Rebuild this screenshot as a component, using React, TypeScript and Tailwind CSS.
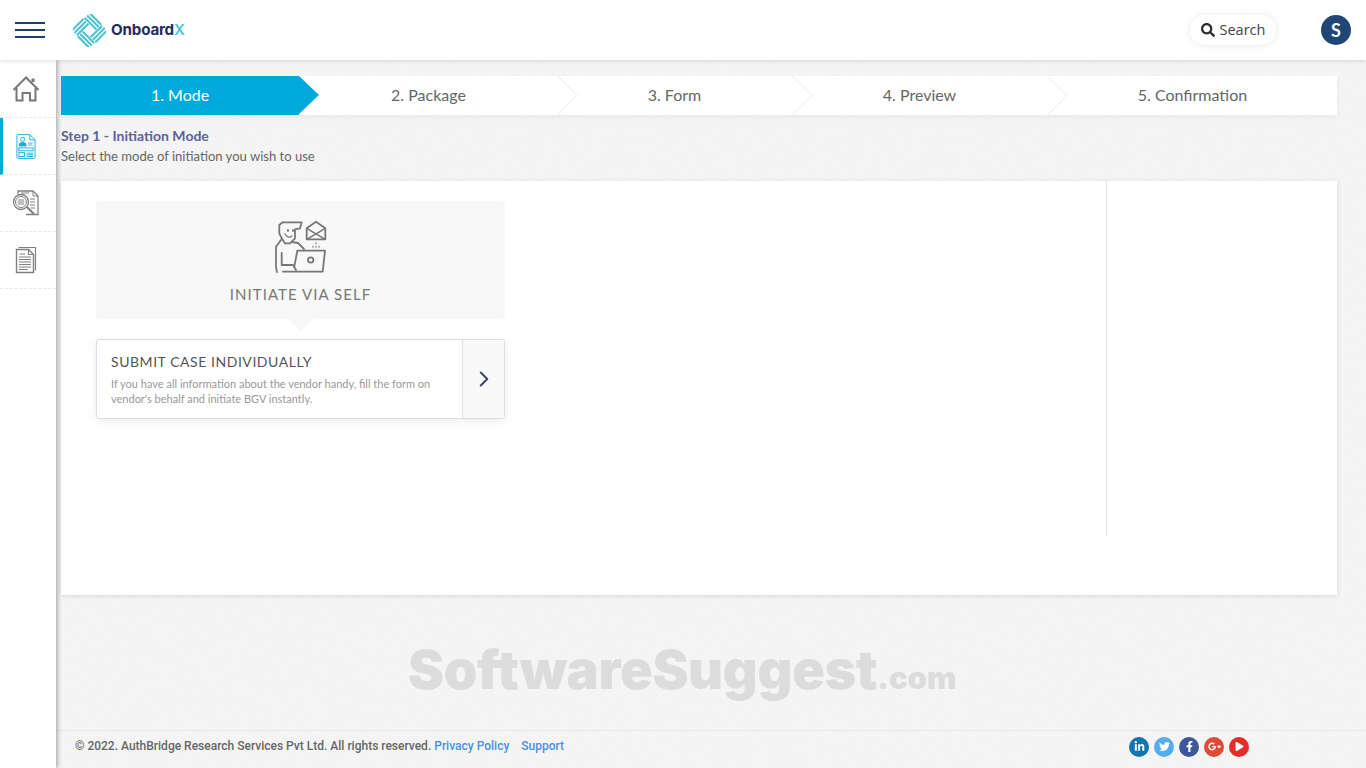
import React from "react";
import { FaLinkedinIn, FaTwitter, FaFacebookF, FaGooglePlusG, FaPlay, FaSearch } from "react-icons/fa";
import { LuChevronRight } from "react-icons/lu";

const Logo = () => (
  <svg width="33" height="33" viewBox="0 0 32 32" fill="none" stroke="#4fc3d3" strokeWidth="2.1">
    <g transform="rotate(45 16 16)">
      <path d="M4 4H20M4 7.3H20M4 10.6H20" />
      <path d="M28 4V20M24.7 4V20M21.4 4V20" />
      <path d="M28 28H12M28 24.7H12M28 21.4H12" />
      <path d="M4 28V12M7.3 28V12M10.6 28V12" />
    </g>
  </svg>
);

const HomeIcon = () => (
  <svg width="28" height="30" viewBox="0 0 28 30" fill="none" stroke="#777" strokeWidth="2">
    <path d="M1.5 16 14 3.5 26.5 16" />
    <path d="M4.5 14V26.5H10.5V19H18V26.5H23.5V14" />
    <path d="M21 4.5V8" strokeWidth="3" />
  </svg>
);

const BlueDoc = () => (
  <svg width="20" height="27" viewBox="0 0 21 27" fill="none" stroke="#1aaedf" strokeWidth="1">
    <path d="M1.5 1H14.5L20 6.5V25A1 1 0 0 1 19 26H2A1 1 0 0 1 1 25V1.5Z" />
    <path d="M14.5 1V6.5H20" />
    <circle cx="7" cy="6" r="2.2" />
    <path d="M3.5 13V10.5Q7 7.5 10.5 10.5V13Z" fill="#1aaedf" />
    <path d="M12.5 10H17.5M12.5 12H17.5" strokeWidth="1.2" opacity=".7" />
    <rect x="3" y="15" width="15" height="3" />
    <rect x="3" y="20" width="6" height="4" />
    <path d="M11 20.5H18M11 22.2H18M11 24H18" />
  </svg>
);

const SearchDoc = () => (
  <svg width="28" height="28" viewBox="0 0 28 28" fill="none" stroke="#808080" strokeWidth="1">
    <path d="M6 5V2H21L26 7V25.5H14" strokeWidth="1.3" />
    <path d="M21 2V7H26" />
    <circle cx="9" cy="13" r="7.5" strokeWidth="1.3" />
    <circle cx="9" cy="13" r="5.5" />
    <path d="M6 11H12M5.5 13H12.5M6 15H12" />
    <path d="M15 18 22 25" strokeWidth="2.2" />
    <path d="M9 4H17M18 10H23M18 13H23M18 16H23M19 19H23" strokeWidth="1.2" />
  </svg>
);

const PaperDoc = () => (
  <svg width="22" height="28" viewBox="0 0 22 28" fill="none" stroke="#808080" strokeWidth="1.2">
    <path d="M3.5 1.5H20.5V24.5" />
    <path d="M1.5 3.5H13.5L18.5 8.5V26.5H1.5Z" strokeWidth="1.4" />
    <path d="M13.5 3.5V8.5H18.5" />
    <path d="M4.5 8H10M4 11H16M4 13.5H16M4 16H16M4 18.5H16M4 21H16M4 23.5H13" strokeWidth="1.1" />
  </svg>
);

const PersonIcon = () => (
  <svg width="60" height="64" viewBox="0 0 60 64" fill="none" stroke="#777" strokeWidth="1.8" strokeLinejoin="round" strokeLinecap="round">
    <path d="M9.3 18.3V10L12.7 7.3H31.7L30 13.3 25 14.3V23.3L20 28.3H15L11.7 23.3Z" />
    <path d="M15 19Q18 24 22 21" strokeWidth="1.4" />
    <path d="M18 15V16M23 15V16" />
    <path d="M11 25 6 31.7V52L7 57" />
    <path d="M11.7 38V50H23L26 55" />
    <path d="M21.7 27 28 28 34 34" />
    <path d="M24.3 51.7 27.3 35.7H55L52.7 56.7H13" />
    <circle cx="40.7" cy="45" r="2.7" />
    <path d="M36.7 13.3 46 6.7 55.3 13.3V24.3H36.7Z" />
    <path d="M36.7 13.3 55.3 24.3M55.3 13.3 36.7 24.3" strokeWidth="1.5" />
    <path d="M46 28V28.5M43 31.5V32M46 31.5V32M49 31.5V32" strokeWidth="1.3" />
  </svg>
);

const Chevron = () => (
  <svg width="21" height="39" viewBox="0 0 21 39" fill="none" stroke="#e9e9e9" className="absolute right-[-20px] top-0">
    <path d="M0.5 0 20 19.5 0.5 39" />
  </svg>
);

const steps = [
  { label: "2. Package", cls: "w-[259px]" },
  { label: "3. Form", cls: "w-[235px] pr-[2px]" },
  { label: "4. Preview", cls: "w-[255px] pr-[2px]" },
  { label: "5. Confirmation", cls: "w-[289px]" },
];

const socials = [
  { bg: "bg-[#0f76b1]", icon: <FaLinkedinIn size={11} /> },
  { bg: "bg-[#55acee]", icon: <FaTwitter size={11} /> },
  { bg: "bg-[#3b5998]", icon: <FaFacebookF size={11} /> },
  { bg: "bg-[#dd4b39]", icon: <FaGooglePlusG size={13} /> },
  { bg: "bg-[#e52d27]", icon: <FaPlay size={9} /> },
];

export default function App() {
  return (
    <div className="relative flex h-[768px] w-[1366px] flex-col overflow-hidden bg-[#f7f7f7] font-['Lato',sans-serif]">
      <svg className="pointer-events-none absolute inset-0 h-full w-full opacity-[0.09]">
        <filter id="grain">
          <feTurbulence type="fractalNoise" baseFrequency="0.8" numOctaves="3" />
          <feColorMatrix type="saturate" values="0" />
        </filter>
        <rect width="100%" height="100%" filter="url(#grain)" />
      </svg>

      <header className="relative z-20 flex h-[60px] shrink-0 items-center bg-white pl-[15px] pr-[15px] shadow-[0_1px_4px_rgba(0,0,0,0.14)]">
        <div className="flex w-[30px] flex-col gap-[5px]">
          <span className="h-[2px] bg-[#1f3d6e]" />
          <span className="h-[2px] bg-[#1f3d6e]" />
          <span className="h-[2px] bg-[#1f3d6e]" />
        </div>
        <div className="ml-[28px] flex items-center">
          <Logo />
          <span className="ml-[5px] font-['Inter',sans-serif] text-[15.2px] font-bold tracking-[-0.2px] text-[#242c5e]">
            Onboard<span className="font-semibold text-[#4fc3d3]">X</span>
          </span>
        </div>
        <div className="ml-auto flex h-[30px] w-[86px] items-center justify-center gap-[5px] rounded-full bg-white text-[15px] text-[#444] shadow-[0_0_8px_rgba(0,0,50,0.09)]">
          <FaSearch size={14} className="text-[#2c2c2c]" />
          <span className="font-['Open_Sans','Lato',sans-serif] text-[14.5px]">Search</span>
        </div>
        <div className="ml-[45px] flex h-[30px] w-[30px] items-center justify-center rounded-full bg-[#1f4674] text-[18px] font-bold text-white">S</div>
      </header>

      <div className="relative flex min-h-0 flex-1">
        <aside className="relative z-10 w-[56px] shrink-0 bg-white pt-[1px] shadow-[2px_0_4px_rgba(0,0,0,0.28)]">
          <div className="flex h-[57px] items-center justify-center border-b border-dashed border-[#e8e8e8] pr-[4px]"><HomeIcon /></div>
          <div className="flex h-[57px] items-center justify-center border-b border-l-[3px] border-dashed border-b-[#e8e8e8] border-l-[#00a9dc] [border-left-style:solid] pr-[7px]"><BlueDoc /></div>
          <div className="flex h-[57px] items-center justify-center border-b border-dashed border-[#e8e8e8] pr-[4px]"><SearchDoc /></div>
          <div className="flex h-[57px] items-center justify-center border-b border-dashed border-[#e8e8e8] pr-[4px]"><PaperDoc /></div>
        </aside>

        <main className="relative flex min-w-0 flex-1 flex-col pt-[16px]">
          <div className="ml-[5px] flex h-[39px] w-[1276px] bg-white shadow-[0_2px_5px_rgba(0,0,0,0.06)]">
            <div className="relative flex w-[238px] items-center justify-center bg-[#00a9dc] pb-[2px] text-[16px] text-white">
              1. Mode
              <span className="absolute right-[-20px] top-0 h-0 w-0 border-y-[19.5px] border-l-[20px] border-y-transparent border-l-[#00a9dc]" />
            </div>
            {steps.map((s, i) => (
              <div key={s.label} className={`relative flex items-center justify-center pb-[2px] text-[16px] text-[#666] ${s.cls}`}>
                {s.label}
                {i < 3 && <Chevron />}
              </div>
            ))}
          </div>

          <div className="ml-[5px] mt-[11px] text-[14px] font-bold leading-[20px] text-[#5f5f9e]">Step 1 - Initiation Mode</div>
          <div className="ml-[5px] text-[13.05px] leading-[20px] text-[#666]">Select the mode of initiation you wish to use</div>

          <section className="ml-[5px] mt-[15px] flex h-[414px] w-[1276px] shrink-0 bg-white shadow-[0_1px_5px_rgba(0,0,0,0.12)]">
            <div className="h-[355px] w-[1046px] border-r border-[#e4e4e4] pl-[35px] pt-[20px]">
              <div className="relative flex h-[118px] w-[409px] flex-col items-center rounded-[3px] bg-[#f8f8f8] pr-[2px] pt-[14px]">
                <PersonIcon />
                <div className="ml-[2px] mt-[5px] text-[15px] leading-[20px] tracking-[1.05px] text-[#777]">INITIATE VIA SELF</div>
                <span className="absolute bottom-[-12px] left-1/2 h-0 w-0 -translate-x-1/2 border-x-[13px] border-t-[12px] border-x-transparent border-t-[#f8f8f8]" />
              </div>
              <div className="mt-[20px] flex h-[80px] w-[409px] rounded-[3px] border border-[#dedede] bg-white shadow-[0_2px_8px_rgba(0,0,0,0.08)]">
                <div className="flex-1 pl-[14px] pt-[12px]">
                  <div className="text-[14px] leading-[20px] tracking-[0.55px] text-[#555]">SUBMIT CASE INDIVIDUALLY</div>
                  <div className="mt-[4px] text-[11px] leading-[15px] text-[#999]">
                    If you have all information about the vendor handy, fill the form on<br />vendor's behalf and initiate BGV instantly.
                  </div>
                </div>
                <div className="flex w-[42px] items-center justify-center rounded-r-[3px] border-l border-[#dedede] bg-[#f9f9f9] text-[#3e4a68]">
                  <LuChevronRight size={26} strokeWidth={1.9} />
                </div>
              </div>
            </div>
          </section>

          <footer className="mt-auto flex h-[38px] items-center border-t border-[#e8e8e8] pb-[6px] pl-[19px] font-['Roboto',sans-serif] text-[12px] font-medium text-[#666]">
            <span className="mb-[2px]">© 2022. AuthBridge Research Services Pvt Ltd. All rights reserved.</span>
            <span className="mb-[2px] ml-[3px] text-[#4a90e2]">Privacy Policy</span>
            <span className="mb-[2px] ml-[12px] text-[#4a90e2]">Support</span>
            <div className="ml-[565px] flex gap-[5px]">
              {socials.map((s, i) => (
                <span key={i} className={`flex h-[20px] w-[20px] items-center justify-center rounded-full text-white ${s.bg}`}>{s.icon}</span>
              ))}
            </div>
          </footer>
        </main>
      </div>

      <div className="pointer-events-none absolute left-[408px] top-[635px] whitespace-nowrap font-['Inter',sans-serif] text-[54px] font-black leading-[70px] tracking-[-0.3px] text-[#dcdcdc]">
        SoftwareSuggest<span className="text-[31px] tracking-normal">.com</span>
      </div>
    </div>
  );
}
